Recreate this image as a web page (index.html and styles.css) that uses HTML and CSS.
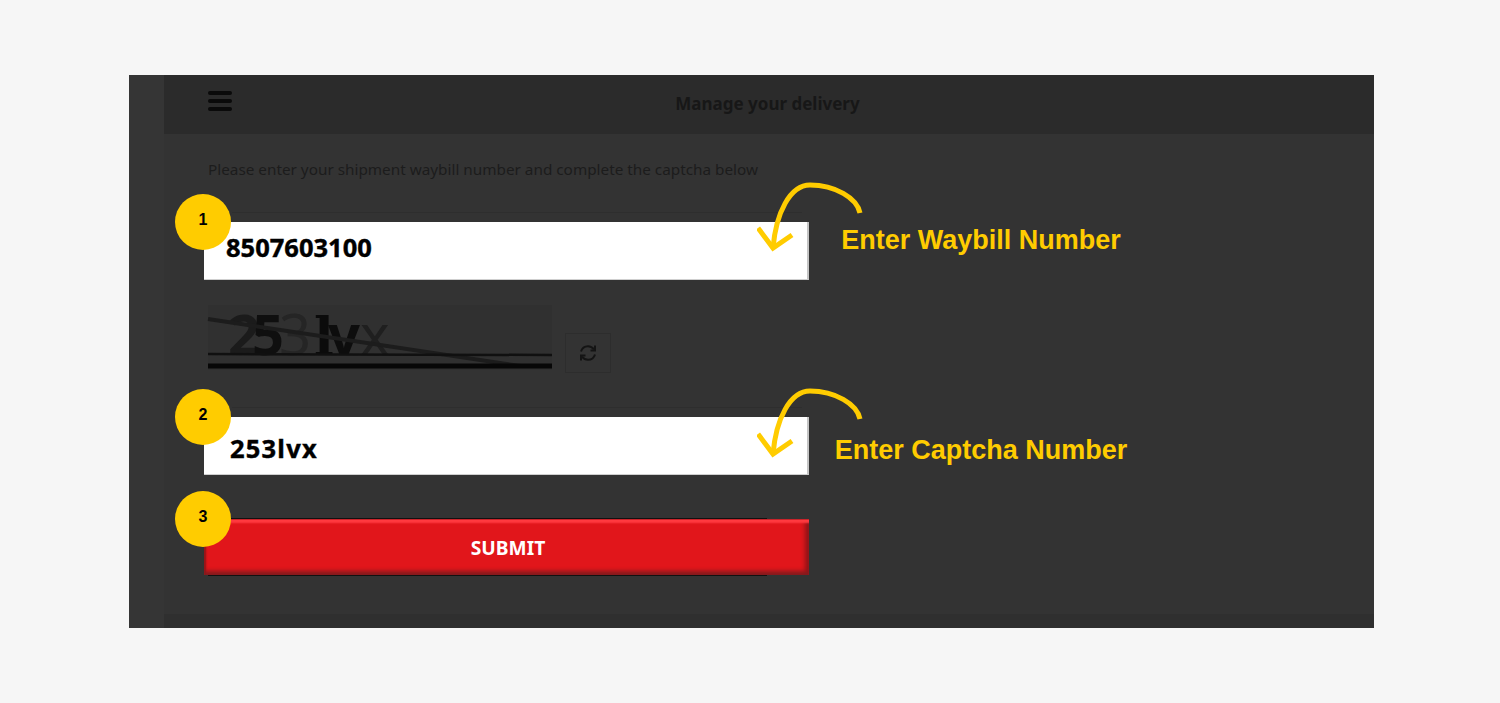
FILE: index.html
```html
<!DOCTYPE html>
<html lang="en">
<head>
    <meta charset="UTF-8">
    <meta name="viewport" content="width=device-width, initial-scale=1.0">
    <title>Manage your delivery</title>
    <link rel="stylesheet" href="styles.css">
</head>
<body>
    <div class="frame">
        <div class="rail"></div>
        <div class="main">
            <!-- Barra do topo -->
            <div class="topbar">
                <div class="burger"><span></span><span></span><span></span></div>
                <div class="topbar-title">Manage your delivery</div>
            </div>

            <div class="content">
                <p class="intro">Please enter your shipment waybill number and complete the captcha below</p>

                <div class="row row-waybill">
                    <div class="badge">1</div>
                    <div class="field field-waybill">8507603100</div>
                    <div class="hint">Enter Waybill Number</div>
                    <svg class="arrow" width="110" height="72" viewBox="0 0 110 72">
                        <path d="M103 32C100 17 78 4 53 4C33 4 19 32 16 67" />
                        <path d="M1 47L16 67L35 54" />
                    </svg>
                </div>

                <div class="captcha-row">
                    <svg class="captcha" width="344" height="65" viewBox="0 0 344 65">
                        <rect width="344" height="65" fill="#303030" />
                        <text y="50">
                            <tspan class="cap-sans" x="20" fill="#1b1b1b">2</tspan>
                            <tspan class="cap-sans" x="44" fill="#0f0f0f">5</tspan>
                            <tspan class="cap-thin" x="71" fill="#252525">3</tspan>
                            <tspan class="cap-serif" x="106" fill="#0b0b0b">l</tspan>
                            <tspan class="cap-sans" x="120" fill="#0d0d0d">v</tspan>
                            <tspan class="cap-thin" x="152" fill="#1f1f1f">x</tspan>
                        </text>
                        <line x1="0" y1="14" x2="312" y2="61" stroke="#1c1c1c" stroke-width="4" />
                        <line x1="0" y1="49" x2="344" y2="50" stroke="#101010" stroke-width="2.5" />
                        <line x1="0" y1="61" x2="344" y2="61" stroke="#070707" stroke-width="5" />
                    </svg>
                    <div class="refresh">
                        <svg width="20" height="20" viewBox="0 0 20 20">
                            <path d="M3 8.500C4 5 6.800 3.200 10 3.200C12.500 3.200 14.500 4.300 16 6.300" />
                            <path d="M17 2.500V7.500H12.500" />
                            <path d="M17 11.500C16 15 13.200 16.800 10 16.800C7.500 16.800 5.500 15.700 4 13.700" />
                            <path d="M3 17.500V12.500H7.500" />
                        </svg>
                    </div>
                </div>

                <div class="row row-captcha">
                    <div class="badge">2</div>
                    <div class="field field-captcha">253lvx</div>
                    <div class="hint">Enter Captcha Number</div>
                    <svg class="arrow" width="110" height="72" viewBox="0 0 110 72">
                        <path d="M103 32C100 17 78 4 53 4C33 4 19 32 16 67" />
                        <path d="M1 47L16 67L35 54" />
                    </svg>
                </div>

                <div class="row row-submit">
                    <button class="submit" type="button">SUBMIT</button>
                    <div class="badge">3</div>
                </div>
            </div>

            <div class="footer"></div>
        </div>
    </div>
</body>
</html>
```

FILE: styles.css
```css
body {
    margin: 0;
    padding: 75px 126px 75px 129px;
    background-color: #f6f6f6;
    font-family: "Noto Sans", sans-serif;
}
p {
    margin: 0;
}
.frame {
    display: flex;
    height: 553px;
    background-color: #353535;
}
.rail {
    width: 35px;
}
.main {
    flex: 1;
    display: flex;
    flex-direction: column;
    background-color: #333333;
}

/* Barra do topo */
.topbar {
    display: flex;
    align-items: center;
    height: 59px;
    padding: 0 71px 0 44px;
    background-color: #2b2b2b;
}
.burger {
    display: flex;
    flex-direction: column;
    gap: 3.500px;
    width: 24px;
    margin-top: -7px;
}
.burger span {
    height: 4.500px;
    border-radius: 2px;
    background-color: #0a0a0a;
}
.topbar-title {
    flex: 1;
    margin-top: -3px;
    text-align: center;
    font-size: 17px;
    font-weight: bold;
    color: #171717;
}

.content {
    padding: 23px 0 0 40px;
}
.intro {
    margin-left: 4px;
    font-size: 15.300px;
    line-height: 24px;
    color: #1c1c1c;
}

/* Linhas do formulario */
.row {
    position: relative;
    display: flex;
    align-items: center;
    width: 949px;
}
.row-waybill {
    margin-top: 41px;
}
.row-captcha,
.row-submit {
    margin-top: 44px;
}
.field {
    box-sizing: border-box;
    width: 605px;
    height: 58px;
    border-right: 2px solid #c4c4c4;
    border-bottom: 1px solid #cfcfcf;
    background-color: #ffffff;
    font-size: 25.500px;
    font-weight: bold;
    line-height: 51px;
    color: #000000;
    -webkit-text-stroke: 0.4px #000000;
}
.field-waybill {
    padding-left: 22px;
}
.field-captcha {
    padding-left: 26px;
    line-height: 63px;
    letter-spacing: 1.200px;
}
.field::before {
    content: "";
    position: absolute;
    top: -10px;
    left: 28px;
    width: 570px;
    height: 1px;
    background-color: #2e2e2e;
}
.hint {
    flex: 1;
    text-align: center;
    font-family: "Liberation Sans", Arial, sans-serif;
    font-size: 27px;
    font-weight: bold;
    color: #ffcc00;
}
.row-waybill .hint {
    margin-top: -22px;
}
.row-captcha .hint {
    margin-top: 8px;
}
.badge {
    position: absolute;
    top: -28px;
    left: -29px;
    display: flex;
    align-items: center;
    justify-content: center;
    box-sizing: border-box;
    width: 56px;
    height: 56px;
    padding-bottom: 5px;
    border-radius: 50%;
    background-color: #ffcc00;
    font-family: "Liberation Sans", Arial, sans-serif;
    font-size: 16px;
    font-weight: bold;
    color: #000000;
}
.arrow {
    position: absolute;
    left: 553px;
    top: -41px;
}
.row-captcha .arrow {
    top: -30px;
}
.arrow path {
    fill: none;
    stroke: #ffcc00;
    stroke-width: 5px;
}

/* Captcha */
.captcha-row {
    display: flex;
    align-items: flex-end;
    gap: 13px;
    height: 68px;
    margin: 25px 0 0 4px;
}
.captcha {
    align-self: flex-start;
    overflow: visible;
}
.cap-sans {
    font-family: "Noto Sans", sans-serif;
    font-size: 56px;
    font-weight: bold;
}
.cap-thin {
    font-family: "Noto Sans", sans-serif;
    font-size: 56px;
}
.cap-serif {
    font-family: "DejaVu Serif", serif;
    font-size: 52px;
    font-weight: bold;
}
.refresh {
    display: flex;
    align-items: center;
    justify-content: center;
    box-sizing: border-box;
    width: 46px;
    height: 40px;
    border: 1px solid #2d2d2d;
}
.refresh path {
    fill: none;
    stroke: #141414;
    stroke-width: 2px;
}

/* Botao */
.submit {
    position: relative;
    box-sizing: border-box;
    width: 605px;
    height: 56px;
    padding: 0 0 0 3px;
    border: none;
    background-color: #e1161b;
    box-shadow: inset 0 1px 0 #c9242a,
        inset 0 5px 2px -1px #ff3a40,
        inset 0 -6px 4px -2px #851a1d,
        inset -6px 0 4px -2px #8f1418,
        inset 3px 0 2px -1px #8f1418;
    font-family: "Noto Sans", sans-serif;
    font-size: 19.200px;
    font-weight: bold;
    color: #ffffff;
}
.submit::before,
.submit::after {
    content: "";
    position: absolute;
    left: 4px;
    width: 559px;
    height: 1px;
    background-color: #111111;
}
.submit::before {
    top: -1px;
}
.submit::after {
    bottom: -1px;
}

.footer {
    height: 14px;
    margin-top: auto;
    background-color: #2f2f2f;
}
```
